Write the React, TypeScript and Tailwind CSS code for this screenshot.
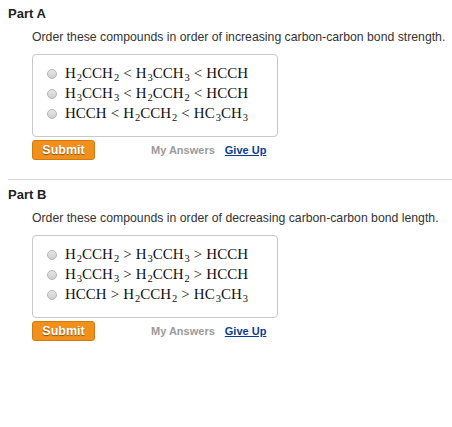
import React from 'react';

type Part = {
  label: string;
  prompt: string;
  op: string;
};

const parts: Part[] = [
  { label: 'Part A', prompt: 'Order these compounds in order of increasing carbon-carbon bond strength.', op: '<' },
  { label: 'Part B', prompt: 'Order these compounds in order of decreasing carbon-carbon bond length.', op: '>' },
];

const S: React.FC<{ n: string }> = ({ n }) => (
  <sub className="text-[10.5px] relative top-[3px] align-baseline leading-none ml-[1px]">{n}</sub>
);

const Op: React.FC<{ op: string }> = ({ op }) => <span className="mx-[4px]">{op}</span>;

const Row: React.FC<{ children: React.ReactNode }> = ({ children }) => (
  <label className="flex items-center h-5">
    <span className="w-[10px] h-[10px] rounded-full border border-[#b5b5b5] bg-gradient-to-b from-[#e6e6e6] to-[#cfcfcf] mr-[8px] shrink-0" />
    <span className="text-[15px] leading-5 text-[#111] whitespace-nowrap -mt-[2px]" style={{ fontFamily: '"Liberation Serif", "DejaVu Serif", serif' }}>
      {children}
    </span>
  </label>
);

const Choices: React.FC<{ op: string }> = ({ op }) => (
  <div className="w-[246px] border border-[#c8c8c8] rounded-[4px] pl-[14px] pt-[9px] pb-[12px] mt-[9px]">
    <Row>
      H<S n="2" />CCH<S n="2" /><Op op={op} />H<S n="3" />CCH<S n="3" /><Op op={op} />HCCH
    </Row>
    <Row>
      H<S n="3" />CCH<S n="3" /><Op op={op} />H<S n="2" />CCH<S n="2" /><Op op={op} />HCCH
    </Row>
    <Row>
      HCCH<Op op={op} />H<S n="2" />CCH<S n="2" /><Op op={op} />HC<S n="3" />CH<S n="3" />
    </Row>
  </div>
);

const PartBlock: React.FC<{ part: Part }> = ({ part }) => (
  <div>
    <h3 className="text-[13px] font-bold leading-4 text-[#222]">{part.label}</h3>
    <div className="pl-6 pt-[7px]">
      <p className="text-[12.25px] leading-4 text-[#333]">{part.prompt}</p>
      <Choices op={part.op} />
      <div className="flex items-center mt-[3px]">
        <button className="w-[63px] h-[20px] rounded-[3px] bg-[#f2901c] border border-[#d27a12] text-white text-[12.5px] font-bold leading-none [text-shadow:0_1px_1px_rgba(0,0,0,0.45)]">
          Submit
        </button>
        <span className="ml-[56px] text-[11px] font-bold text-[#9a9a9a]">My Answers</span>
        <span className="ml-[10px] text-[11px] font-bold text-[#0b3d91] underline">Give Up</span>
      </div>
    </div>
  </div>
);

export default function App() {
  return (
    <div className="w-[452px] h-[427px] bg-white pl-2 pt-[6px]" style={{ fontFamily: '"Liberation Sans", Arial, sans-serif' }}>
      <PartBlock part={parts[0]} />
      <div className="border-t border-[#d4d4d4] mt-[19px] pt-[7px]">
        <PartBlock part={parts[1]} />
      </div>
    </div>
  );
}
